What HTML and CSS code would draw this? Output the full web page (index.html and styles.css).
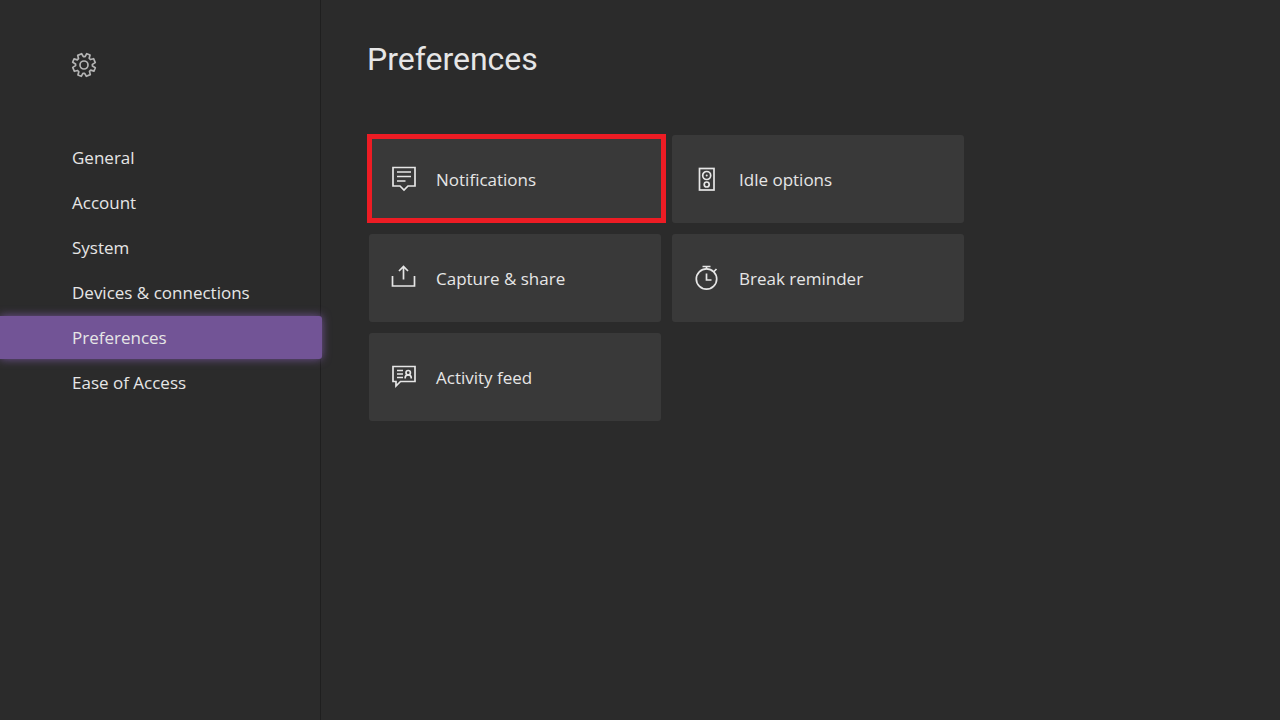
FILE: index.html
```html
<!DOCTYPE html>
<html lang="en">
<head>
<meta charset="utf-8">
<meta name="viewport" content="width=device-width, initial-scale=1">
<title>Preferences</title>
<link rel="stylesheet" href="styles.css">
</head>
<body>
<div class="app">
  <aside class="sidebar">
    <svg class="gear" viewBox="0 0 26 26" aria-hidden="true">
      <path d="M11.200 1.500H14.800L15.200 4.800 16.800 5.500 19.500 3.500 22.500 6.500 20.500 9.200 21.200 10.800 24.500 11.200V14.800L21.200 15.200 20.500 16.800 22.500 19.500 19.500 22.500 16.800 20.500 15.200 21.200 14.800 24.500H11.200L10.800 21.200 9.200 20.500 6.500 22.500 3.500 19.500 5.500 16.800 4.800 15.200 1.500 14.800V11.200L4.800 10.800 5.500 9.200 3.500 6.500 6.500 3.500 9.200 5.500 10.800 4.800Z" transform="rotate(22.5 13 13)"/>
      <circle cx="13" cy="13" r="4"/>
    </svg>
    <nav class="nav" aria-label="Settings">
      <a class="nav-item" href="#general">General</a>
      <a class="nav-item" href="#account">Account</a>
      <a class="nav-item" href="#system">System</a>
      <a class="nav-item" href="#devices">Devices &amp; connections</a>
      <a class="nav-item nav-item-active" href="#preferences" aria-current="page">Preferences</a>
      <a class="nav-item" href="#ease">Ease of Access</a>
    </nav>
  </aside>
  <main class="content">
    <h1 class="title">Preferences</h1>
    <div class="tiles">
      <button class="tile tile-marked" type="button">
        <svg class="icon" viewBox="0 0 26 26" aria-hidden="true"><path d="M2 1.500H24V20H17L13 24 9 20H2ZM6 6H20M6 10.500H20M6 15H14.500"/></svg>
        <span class="label">Notifications</span>
      </button>
      <button class="tile" type="button">
        <svg class="icon" viewBox="0 0 26 26" aria-hidden="true"><rect x="5.500" y="2.500" width="14.500" height="21.500"/><circle cx="12.700" cy="9.500" r="4"/><circle cx="12.700" cy="18.500" r="2.500"/><circle class="dot" cx="12.700" cy="9.500" r="1"/></svg>
        <span class="label">Idle options</span>
      </button>
      <button class="tile" type="button">
        <svg class="icon" viewBox="0 0 26 26" aria-hidden="true"><path d="M1.500 11V21H23.500V11M12.500 14.500V1.500M8 6 12.500 1.500 17 6"/></svg>
        <span class="label">Capture &amp; share</span>
      </button>
      <button class="tile" type="button">
        <svg class="icon" viewBox="0 0 26 26" aria-hidden="true"><circle cx="12.500" cy="14" r="10.200"/><path d="M12.500 8.500V15H17.500M8.500 1.500H16.500M12.500 1.500V4M19.500 7 22.500 4"/></svg>
        <span class="label">Break reminder</span>
      </button>
      <button class="tile" type="button">
        <svg class="icon" viewBox="0 0 26 26" aria-hidden="true"><path d="M2 2.500H24V17.500H9.500L5 22V17.500H2ZM6 6.500H12M6 10H12M6 13.500H12M14.200 14.500V13.500C14.200 12 15.500 11 17.200 11S20.200 12 20.200 13.500V14.500"/><circle cx="17.200" cy="8.700" r="2.200"/></svg>
        <span class="label">Activity feed</span>
      </button>
    </div>
  </main>
</div>
</body>
</html>
```
FILE: styles.css
```css
* {
  box-sizing: border-box;
}

body {
  margin: 0;
  background: #2b2b2b;
  color: #e6e6e6;
  font-family: "Open Sans", "Noto Sans", sans-serif;
  font-size: 17px;
  line-height: 24px;
}

.app {
  display: grid;
  grid-template-columns: 321px minmax(0, 1fr);
  min-height: 100vh;
}

.sidebar {
  border-right: 1px solid #1f1f1f;
  padding-top: 52px;
}

.gear {
  display: block;
  width: 26px;
  height: 26px;
  margin-left: 71px;
  fill: none;
  stroke: #b4b4b4;
  stroke-width: 1.7;
  stroke-linejoin: round;
}

.nav {
  display: grid;
  gap: 2px;
  margin-top: 58px;
  margin-right: -2px;
}

.nav-item {
  display: flex;
  align-items: center;
  height: 43px;
  padding-left: 72px;
  border-radius: 0 3px 3px 0;
  color: inherit;
  text-decoration: none;
}

.nav-item-active {
  background: #725496;
  box-shadow: 0 0 10px #725496;
}

.content {
  padding: 39px 48px 48px 46px;
}

.title {
  margin: 0;
  font-family: Roboto, sans-serif;
  font-size: 32px;
  font-weight: 400;
  line-height: 40px;
}

.tiles {
  display: grid;
  grid-template-columns: repeat(2, minmax(0, 1fr));
  gap: 11px;
  max-width: 595px;
  margin: 56px 0 0 2px;
}

.tile {
  position: relative;
  display: flex;
  align-items: center;
  gap: 19px;
  height: 88px;
  padding: 0 22px;
  border: 0;
  border-radius: 3px;
  background: #393939;
  color: inherit;
  font: inherit;
  text-align: left;
}

.tile-marked::after {
  content: "";
  position: absolute;
  inset: -1px -5px 0 -2px;
  border: 5px solid #ed1c24;
}

.label {
  padding-top: 2px;
}

.icon {
  width: 26px;
  height: 26px;
  flex: none;
  fill: none;
  stroke: #e6e6e6;
  stroke-width: 1.7;
}

.dot {
  fill: #e6e6e6;
  stroke: none;
}
```
